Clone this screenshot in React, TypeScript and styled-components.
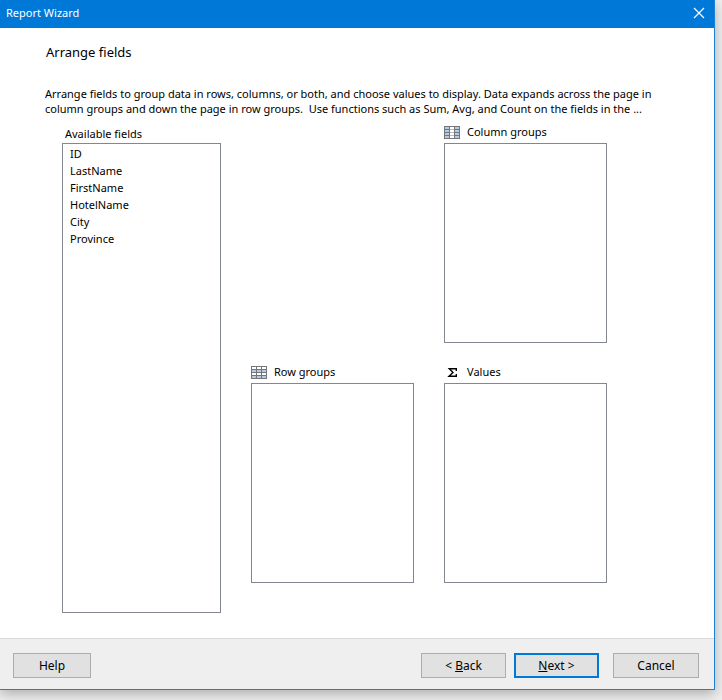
import React, { useId } from "react";
import styled, { createGlobalStyle } from "styled-components";

const GlobalStyle = createGlobalStyle`
  *, *::before, *::after { box-sizing: border-box; }
  body {
    margin: 0;
    background: #efefef;
    color: #000;
    font: 11px/15px "Noto Sans", "Open Sans", sans-serif;
  }
  button, select { font: inherit; color: inherit; }
`;

const Desktop = styled.div`
  display: flex;
  min-height: 100vh;
  padding: 0 7px 10px 0;
  overflow: hidden;
`;

const Dialog = styled.div`
  flex: 1;
  display: flex;
  flex-direction: column;
  background: #fff;
  border: solid #1a82d6;
  border-width: 0 1px 1px 0;
  box-shadow: 0 4px 12px rgba(0, 0, 0, 0.28);
`;

const TitleBar = styled.header`
  display: flex;
  align-items: center;
  justify-content: space-between;
  height: 28px;
  padding: 0 7px 3px 6px;
  background: #0078d7;
  color: #fff;
`;

const CloseButton = styled.button`
  display: flex;
  padding: 2px;
  border: 0;
  background: transparent;
  color: #fff;
`;

const Content = styled.main`
  flex: 1;
  display: flex;
  flex-direction: column;
  padding: 16px 0 25px;
`;

const Heading = styled.h1`
  margin: 0 46px 26px;
  font-size: 13px;
  font-weight: 400;
  line-height: 16px;
`;

const Intro = styled.p`
  margin: 0 45px 8px;
  line-height: 15px;
  white-space: pre-wrap;
`;

const FieldGrid = styled.div`
  flex: 1;
  display: grid;
  grid-template-columns: 159fr 163fr 163fr;
  grid-template-rows: 219px 219px 1fr;
  gap: 21px 30px;
  padding: 0 107px 0 62px;
`;

const Group = styled.div<{ $area: string }>`
  grid-area: ${(p) => p.$area};
  display: flex;
  flex-direction: column;
`;

const GroupLabel = styled.label<{ $plain?: boolean }>`
  display: flex;
  align-items: flex-end;
  gap: 7px;
  height: 19px;
  padding: ${(p) => (p.$plain ? "0 0 2px 3px" : "0 0 4px")};
`;

const FieldList = styled.select`
  appearance: none;
  flex: 1;
  width: 100%;
  padding: 2px 0;
  border: 1px solid #828790;
  border-radius: 0;
  background: #fff;
  overflow: hidden;
  outline: none;

  option {
    min-height: 17px;
    padding: 0 7px;
    line-height: 17px;
  }
`;

const Footer = styled.footer`
  display: flex;
  align-items: flex-start;
  padding: 14px 15px 11px 13px;
  border-top: 1px solid #d9d9d9;
  background: #efefef;
`;

const Actions = styled.div`
  display: flex;
  gap: 8px;
  margin-left: auto;
`;

const PushButton = styled.button<{ $primary?: boolean; $wide?: boolean }>`
  width: ${(p) => (p.$wide ? "85px" : "78px")};
  height: 25px;
  padding: 0;
  border: ${(p) => (p.$primary ? "2px solid #0078d7" : "1px solid #adadad")};
  background: #e1e1e1;
  font-size: 12px;
`;

const CancelButton = styled(PushButton)`
  width: 86px;
  margin-left: 6px;
`;

const CloseIcon = () => (
  <svg width="12" height="12" viewBox="0 0 12 12" aria-hidden="true">
    <path d="M1 1 11 11M11 1 1 11" stroke="currentColor" strokeWidth="1.2" />
  </svg>
);

const ColumnsIcon = () => (
  <svg width="16" height="13" viewBox="0 0 16 13" shapeRendering="crispEdges" aria-hidden="true">
    <path fill="#747678" d="M0 0h16v13H0z" />
    <path fill="#b4cbe4" d="M1 1h4v2H1zm0 3h4v2H1zm0 3h4v2H1zm0 3h4v2H1zM11 1h4v2h-4zm0 3h4v2h-4zm0 3h4v2h-4zm0 3h4v2h-4z" />
    <path fill="#b9babb" d="M6 1h4v11H6z" />
    <path fill="#fff" d="M6 1h4v2H6zm0 3h4v2H6zm0 3h4v2H6zm0 3h4v2H6z" />
  </svg>
);

const RowsIcon = () => (
  <svg width="16" height="13" viewBox="0 0 16 13" shapeRendering="crispEdges" aria-hidden="true">
    <path fill="#747678" d="M0 0h16v13H0z" />
    <path fill="#fff" d="M1 1h4v2H1zm5 0h4v2H6zm5 0h4v2h-4zM1 7h4v2H1zm5 0h4v2H6zm5 0h4v2h-4z" />
    <path fill="#b4cbe4" d="M1 4h4v2H1zm5 0h4v2H6zm5 0h4v2h-4zM1 10h4v2H1zm5 0h4v2H6zm5 0h4v2h-4z" />
  </svg>
);

const SigmaIcon = () => (
  <svg width="16" height="13" viewBox="0 0 16 13" aria-hidden="true">
    <path d="M12.300 5V2.700H5.300L9 6.500 5 10.300H12.300V8" fill="none" stroke="#000" strokeWidth="1.4" />
  </svg>
);

interface FieldGroupProps {
  area: string;
  title: string;
  icon?: React.ReactNode;
  fields?: string[];
}

const FieldGroup = ({ area, title, icon, fields = [] }: FieldGroupProps) => {
  const id = useId();
  return (
    <Group $area={area}>
      <GroupLabel htmlFor={id} $plain={!icon}>
        {icon}
        {title}
      </GroupLabel>
      <FieldList id={id} multiple>
        {fields.map((field) => (
          <option key={field}>{field}</option>
        ))}
      </FieldList>
    </Group>
  );
};

const introText =
  "Arrange fields to group data in rows, columns, or both, and choose values to display. Data expands across the page in\n" +
  "column groups and down the page in row groups.  Use functions such as Sum, Avg, and Count on the fields in the ...";

const availableFields = ["ID", "LastName", "FirstName", "HotelName", "City", "Province"];

export default function App() {
  return (
    <>
      <GlobalStyle />
      <Desktop>
        <Dialog role="dialog" aria-label="Report Wizard">
          <TitleBar>
            <span>Report Wizard</span>
            <CloseButton aria-label="Close">
              <CloseIcon />
            </CloseButton>
          </TitleBar>
          <Content>
            <Heading>Arrange fields</Heading>
            <Intro>{introText}</Intro>
            <FieldGrid>
              <FieldGroup area="1 / 1 / 4 / 2" title="Available fields" fields={availableFields} />
              <FieldGroup area="1 / 3 / 2 / 4" title="Column groups" icon={<ColumnsIcon />} />
              <FieldGroup area="2 / 2 / 3 / 3" title="Row groups" icon={<RowsIcon />} />
              <FieldGroup area="2 / 3 / 3 / 4" title="Values" icon={<SigmaIcon />} />
            </FieldGrid>
          </Content>
          <Footer>
            <PushButton>Help</PushButton>
            <Actions>
              <PushButton $wide>
                &lt; <u>B</u>ack
              </PushButton>
              <PushButton $wide $primary>
                <u>N</u>ext &gt;
              </PushButton>
              <CancelButton>Cancel</CancelButton>
            </Actions>
          </Footer>
        </Dialog>
      </Desktop>
    </>
  );
}
